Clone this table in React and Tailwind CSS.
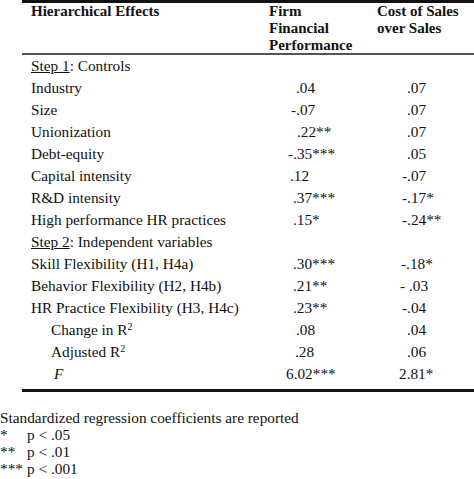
const rows = [
  { label: <><span className="underline">Step 1</span>: Controls</> },
  { label: "Industry", a: ".04", ac: "ml-[27px]", b: ".07", bc: "ml-[30px]" },
  { label: "Size", a: "-.07", ac: "ml-[22px]", b: ".07", bc: "ml-[30px]" },
  { label: "Unionization", a: ".22**", ac: "ml-[28px]", b: ".07", bc: "ml-[30px]" },
  { label: "Debt-equity", a: "-.35***", ac: "ml-[19px]", b: ".05", bc: "ml-[30px]" },
  { label: "Capital intensity", a: ".12", ac: "ml-[21px]", b: "-.07", bc: "ml-[25px]" },
  { label: "R&D intensity", a: ".37***", ac: "ml-[24px]", b: "-.17*", bc: "ml-[25px]" },
  { label: "High performance HR practices", a: ".15*", ac: "ml-[24px]", b: "-.24**", bc: "ml-[25px]" },
  { label: <><span className="underline">Step 2</span>: Independent variables</> },
  { label: "Skill Flexibility (H1, H4a)", a: ".30***", ac: "ml-[24px]", b: "-.18*", bc: "ml-[24px]" },
  { label: "Behavior Flexibility (H2, H4b)", a: ".21**", ac: "ml-[24px]", b: "- .03", bc: "ml-[23px]" },
  { label: "HR Practice Flexibility (H3, H4c)", a: ".23**", ac: "ml-[24px]", b: "-.04", bc: "ml-[25px]" },
  { label: <>Change in R<sup className="text-[10px]">2</sup></>, indent: true, a: ".08", ac: "ml-[27px]", b: ".04", bc: "ml-[30px]" },
  { label: <>Adjusted R<sup className="text-[10px]">2</sup></>, indent: true, a: ".28", ac: "ml-[26px]", b: ".06", bc: "ml-[30px]" },
  { label: <span className="italic">F</span>, indent: true, f: true, a: "6.02***", ac: "ml-[17px]", b: "2.81*", bc: "ml-[22px]" },
];

export default function App() {
  return (
    <div className="w-[474px] h-[479px] bg-white text-[#111] overflow-hidden" style={{ fontFamily: '"Liberation Serif", "Times New Roman", serif' }}>
      <div className="ml-[22px] w-[452px] border-t-[3px] border-b-[3px] border-[#111] pb-[4px]">
        <div className="grid grid-cols-[247px_108px_1fr] border-b-2 border-[#555] font-bold text-[15px] leading-[17px] h-[52px]">
          <div className="pl-[9px]">Hierarchical Effects</div>
          <div>Firm<br />Financial<br />Performance</div>
          <div>Cost of Sales<br />over Sales</div>
        </div>
        {rows.map((r, i) => (
          <div key={i} className="grid grid-cols-[247px_108px_1fr] text-[15.3px] leading-[22px] h-[22px]">
            <div className={r.indent ? (r.f ? "pl-[32px]" : "pl-[29px]") : "pl-[9px]"}>{r.label}</div>
            <div><span className={r.ac}>{r.a}</span></div>
            <div><span className={r.bc}>{r.b}</span></div>
          </div>
        ))}
      </div>
      <div className="mt-[17px] text-[15.3px] leading-[17px]">
        <div>Standardized regression coefficients are reported</div>
        <div className="flex"><span className="w-[27px]">*</span><span>p &lt; .05</span></div>
        <div className="flex"><span className="w-[27px]">**</span><span>p &lt; .01</span></div>
        <div className="flex"><span className="w-[27px]">***</span><span>p &lt; .001</span></div>
      </div>
    </div>
  );
}
